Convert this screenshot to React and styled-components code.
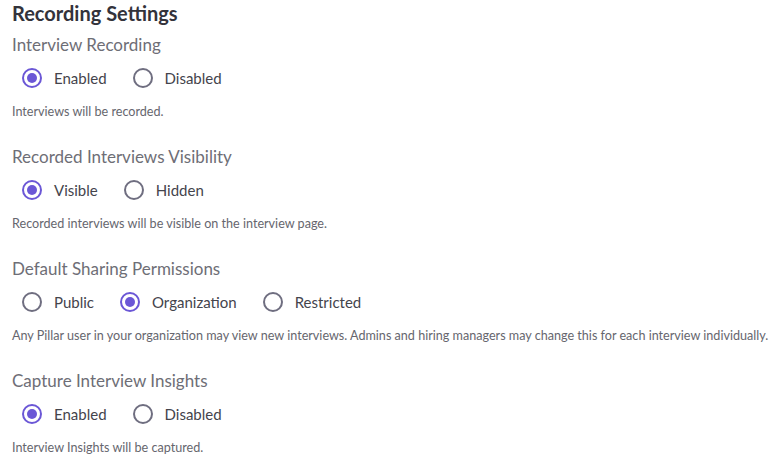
import React from "react";
import styled, { createGlobalStyle } from "styled-components";

const Global = createGlobalStyle`
  html, body { margin: 0; padding: 0; background: #fff; }
  body { font-family: Lato, "Open Sans", sans-serif; }
`;

const Page = styled.div`
  padding: 1px 0 0 12px;
  display: flex;
  flex-direction: column;
`;

const Title = styled.h2`
  margin: 0;
  font-size: 20px;
  line-height: 24px;
  font-weight: 700;
  color: #33333b;
`;

const Section = styled.section`
  display: flex;
  flex-direction: column;
  margin-top: ${(p) => (p.$first ? "10px" : "27px")};
`;

const Label = styled.div`
  font-size: 17px;
  line-height: 20px;
  color: #6e6e76;
`;

const Options = styled.div`
  display: flex;
  align-items: center;
  gap: 26px;
  padding-left: 10px;
  margin-top: 13px;
  height: 20px;
`;

const Option = styled.label`
  display: flex;
  align-items: center;
  gap: 12px;
  font-size: 15px;
  color: #44444c;
  cursor: pointer;
`;

const Radio = styled.span`
  box-sizing: border-box;
  width: 20px;
  height: 20px;
  border-radius: 50%;
  border: 2px solid ${(p) => (p.$checked ? "#6b57d6" : "#6f6e80")};
  display: flex;
  align-items: center;
  justify-content: center;
  &::after {
    content: "";
    width: 10px;
    height: 10px;
    border-radius: 50%;
    background: ${(p) => (p.$checked ? "#6b57d6" : "transparent")};
  }
`;

const Help = styled.div`
  margin-top: 16px;
  font-size: 12.6px;
  line-height: 16px;
  color: #66666e;
  white-space: nowrap;
`;

const sections = [
  { label: "Interview Recording", options: ["Enabled", "Disabled"], checked: 0, help: "Interviews will be recorded." },
  { label: "Recorded Interviews Visibility", options: ["Visible", "Hidden"], checked: 0, help: "Recorded interviews will be visible on the interview page." },
  { label: "Default Sharing Permissions", options: ["Public", "Organization", "Restricted"], checked: 1, help: "Any Pillar user in your organization may view new interviews. Admins and hiring managers may change this for each interview individually." },
  { label: "Capture Interview Insights", options: ["Enabled", "Disabled"], checked: 0, help: "Interview Insights will be captured." },
];

export default function App() {
  return (
    <>
      <Global />
      <Page>
        <Title>Recording Settings</Title>
        {sections.map((s, i) => (
          <Section key={s.label} $first={i === 0}>
            <Label>{s.label}</Label>
            <Options>
              {s.options.map((o, j) => (
                <Option key={o}>
                  <Radio $checked={j === s.checked} />
                  {o}
                </Option>
              ))}
            </Options>
            <Help>{s.help}</Help>
          </Section>
        ))}
      </Page>
    </>
  );
}
